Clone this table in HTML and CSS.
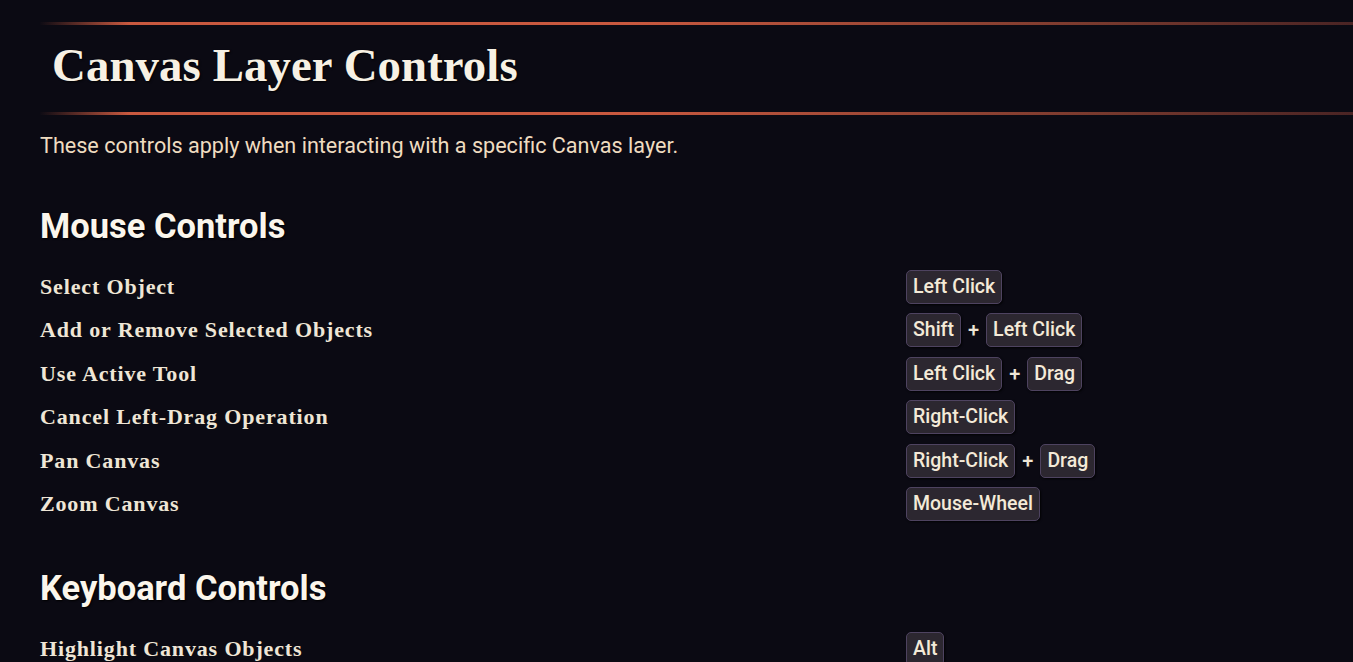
FILE: index.html
```html
<!DOCTYPE html>
<html lang="en">
<head>
<meta charset="utf-8">
<title>Canvas Layer Controls</title>
<link rel="stylesheet" href="styles.css">
</head>
<body>
<main class="page">
  <header class="title-bar">
    <h1 class="title">Canvas Layer Controls</h1>
  </header>
  <p class="intro">These controls apply when interacting with a specific Canvas layer.</p>

  <h2 class="section">Mouse Controls</h2>
  <div class="controls">
    <div class="label">Select Object</div>
    <div class="keys"><kbd class="key">Left Click</kbd></div>

    <div class="label">Add or Remove Selected Objects</div>
    <div class="keys"><kbd class="key">Shift</kbd><span class="plus">+</span><kbd class="key">Left Click</kbd></div>

    <div class="label">Use Active Tool</div>
    <div class="keys"><kbd class="key">Left Click</kbd><span class="plus">+</span><kbd class="key">Drag</kbd></div>

    <div class="label">Cancel Left-Drag Operation</div>
    <div class="keys"><kbd class="key">Right-Click</kbd></div>

    <div class="label">Pan Canvas</div>
    <div class="keys"><kbd class="key">Right-Click</kbd><span class="plus">+</span><kbd class="key">Drag</kbd></div>

    <div class="label">Zoom Canvas</div>
    <div class="keys"><kbd class="key">Mouse-Wheel</kbd></div>
  </div>

  <h2 class="section">Keyboard Controls</h2>
  <div class="controls">
    <div class="label">Highlight Canvas Objects</div>
    <div class="keys"><kbd class="key">Alt</kbd></div>
  </div>
</main>
</body>
</html>
```

FILE: styles.css
```css
html, body {
  margin: 0;
  padding: 0;
  background: #0b0a13;
  height: 100%;
  overflow: hidden;
}

.page {
  padding: 22px 0 0 40px;
  color: #efe6d8;
}

.title-bar {
  padding: 0 0 5px 12px;
  height: 82px;
  display: flex;
  align-items: center;
  border-top: 3px solid transparent;
  border-bottom: 3px solid transparent;
  border-image: linear-gradient(to right, rgba(201, 89, 63, 0) 0, #c9593f 90px, #c9593f 45%, #7a3a2e 80%, #4a2424 100%) 1;
}

.title {
  margin: 0;
  font-family: "Liberation Serif", "Times New Roman", serif;
  font-weight: bold;
  font-size: 46.8px;
  line-height: 1.1;
  color: #f7f1e4;
  text-shadow: 1px 1px 2px rgba(0, 0, 0, 0.9);
  letter-spacing: 0.1px;
}

.intro {
  margin: 18px 0 0 0;
  font-family: Roboto, sans-serif;
  font-size: 21.6px;
  color: #efdcc0;
  line-height: 26px;
}

.section {
  margin: 47px 0 23.5px 0;
  font-family: Roboto, sans-serif;
  font-weight: bold;
  font-size: 34.5px;
  line-height: 40px;
  color: #fbf6ec;
  text-shadow: 1px 1px 2px #000;
}

.controls {
  display: grid;
  grid-template-columns: 866px 1fr;
  row-gap: 9.5px;
  align-items: center;
}

.label {
  font-family: "Liberation Serif", "Times New Roman", serif;
  font-weight: bold;
  font-size: 22px;
  letter-spacing: 0.85px;
  color: #efe6d6;
}

.keys {
  display: flex;
  align-items: center;
}

.key {
  display: inline-block;
  box-sizing: border-box;
  height: 34px;
  line-height: 31px;
  padding: 0 6px;
  border: 1px solid #4e4360;
  border-radius: 5px;
  background: #2c2730;
  box-shadow: 1px 1px 2px rgba(0, 0, 0, 0.8);
  font-family: Roboto, sans-serif;
  font-weight: 500;
  font-size: 19.5px;
  color: #f4ead8;
}

.plus {
  margin: 0 7px;
  font-family: Roboto, sans-serif;
  font-size: 20px;
  font-weight: 500;
  color: #efe6d6;
}
```
